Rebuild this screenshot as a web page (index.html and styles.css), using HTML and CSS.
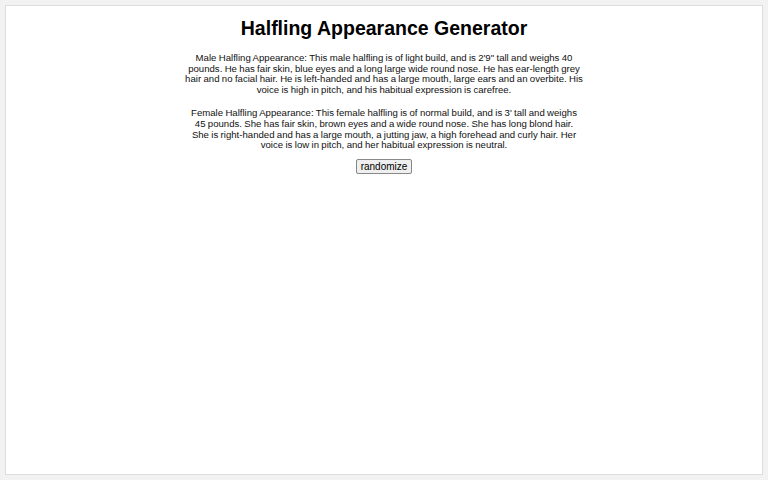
FILE: index.html
```html
<!DOCTYPE html>
<html lang="en">

<head>
    <meta charset="UTF-8">
    <title>Halfling Appearance Generator</title>
    <link rel="stylesheet" href="styles.css">
</head>

<body>
    <main class="kort">
        <h1>Halfling Appearance Generator</h1>

        <p class="beskrivelse" id="male">Male Halfling Appearance: This male halfling is of light build, and is 2'9" tall and weighs 40 pounds. He has fair skin, blue eyes and a long large wide round nose. He has ear-length grey hair and no facial hair. He is left-handed and has a large mouth, large ears and an overbite. His voice is high in pitch, and his habitual expression is carefree.</p>

        <p class="beskrivelse smal" id="female">Female Halfling Appearance: This female halfling is of normal build, and is 3' tall and weighs 45 pounds. She has fair skin, brown eyes and a wide round nose. She has long blond hair. She is right-handed and has a large mouth, a jutting jaw, a high forehead and curly hair. Her voice is low in pitch, and her habitual expression is neutral.</p>

        <button class="knap">randomize</button>
    </main>
</body>

</html>
```

FILE: styles.css
```css
body {
    margin: 0;
    padding: 5px;
    background-color: #f2f2f2;
    font-family: "Liberation Sans", Arial, sans-serif;
    color: #111;
}

.kort {
    box-sizing: border-box;
    height: 470px;
    background-color: #fff;
    border: 1px solid #dcdcdc;
    display: flex;
    flex-direction: column;
    align-items: center;
    padding-top: 11px;
}

h1 {
    font-size: 19.5px;
    margin: 0 0 13px 0;
    color: #000;
}

.beskrivelse {
    max-width: 402px;
    text-align: center;
    font-size: 9.6px;
    line-height: 10.6px;
    word-spacing: -0.3px;
    margin: 0 0 13px 0;
}

.smal {
    max-width: 396px;
}

.knap {
    font-family: "Liberation Sans", Arial, sans-serif;
    font-size: 10px;
    padding: 1px 4px;
    background-color: #efefef;
    border: 1px solid #888;
    border-radius: 2px;
    margin-top: -5px;
}
```
